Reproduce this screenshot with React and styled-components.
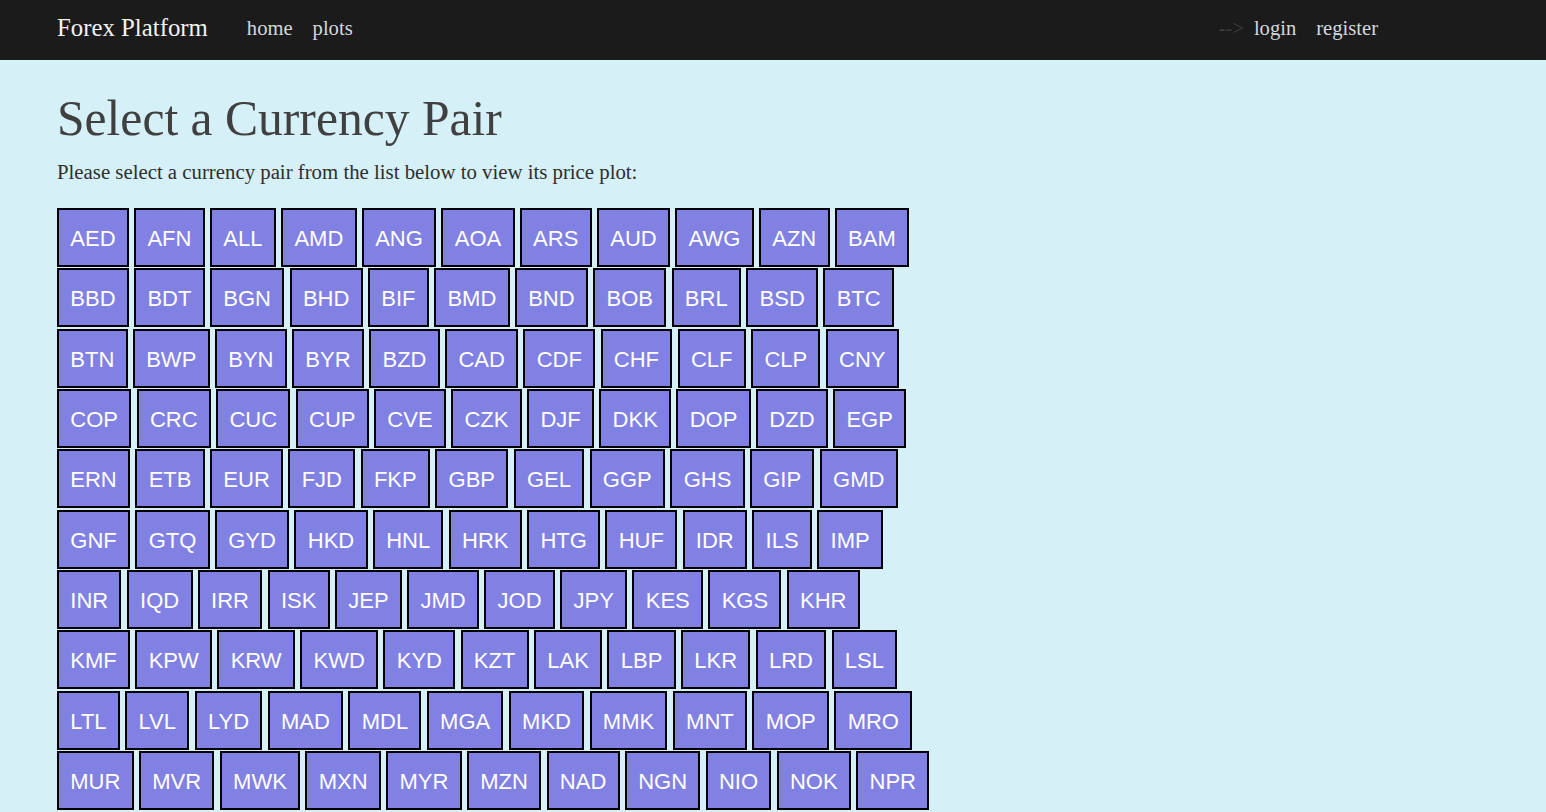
import React from "react";
import styled, { createGlobalStyle } from "styled-components";

const GlobalStyle = createGlobalStyle`
  html, body { margin: 0; padding: 0; }
  body {
    background: #d6f0f7;
    font-family: "Liberation Serif", "Times New Roman", serif;
  }
`;

const NavBar = styled.nav`
  height: 60px;
  background: #1b1b1b;
  display: flex;
  align-items: center;
  padding: 0 168px 0 57px;
  box-sizing: border-box;
`;

const Brand = styled.a`
  font-size: 24.8px;
  color: #f2f2f2;
  text-decoration: none;
  margin-right: 39px;
  margin-top: -4px;
`;

const NavGroup = styled.div`
  display: flex;
  align-items: baseline;
  gap: ${(p) => p.$gap || 20}px;
  margin-left: ${(p) => (p.$right ? "auto" : "0")};
  margin-top: -4px;
`;

const NavLink = styled.a`
  font-size: 20.6px;
  color: ${(p) => (p.$muted ? "#3e3e3e" : "#d4d8dc")};
  text-decoration: none;
  margin-right: ${(p) => p.$mr || 0}px;
`;

const Main = styled.main`
  padding: 30px 0 0 57px;
`;

const Title = styled.h1`
  margin: 0;
  font-weight: normal;
  font-size: 49.6px;
  line-height: 58px;
  color: #404040;
`;

const Lead = styled.p`
  margin: 12px 0 0;
  font-size: 20.8px;
  line-height: 24px;
  color: #2e2e2e;
`;

const Grid = styled.div`
  margin-top: 24px;
  display: flex;
  flex-direction: column;
  gap: 1.33px;
`;

const Row = styled.div`
  display: flex;
  gap: 5.3px;
`;

const PairButton = styled.a`
  box-sizing: border-box;
  height: 59px;
  display: flex;
  align-items: center;
  padding: 3px 11.3px 0;
  border: 2px solid #000;
  background: #8181e4;
  color: #ffffff;
  font-family: "Liberation Sans", Arial, sans-serif;
  font-size: 22px;
  text-decoration: none;
  white-space: nowrap;
`;

const CODES = `AED AFN ALL AMD ANG AOA ARS AUD AWG AZN BAM
BBD BDT BGN BHD BIF BMD BND BOB BRL BSD BTC
BTN BWP BYN BYR BZD CAD CDF CHF CLF CLP CNY
COP CRC CUC CUP CVE CZK DJF DKK DOP DZD EGP
ERN ETB EUR FJD FKP GBP GEL GGP GHS GIP GMD
GNF GTQ GYD HKD HNL HRK HTG HUF IDR ILS IMP
INR IQD IRR ISK JEP JMD JOD JPY KES KGS KHR
KMF KPW KRW KWD KYD KZT LAK LBP LKR LRD LSL
LTL LVL LYD MAD MDL MGA MKD MMK MNT MOP MRO
MUR MVR MWK MXN MYR MZN NAD NGN NIO NOK NPR`
  .split(/\s+/)
  .filter(Boolean);

const rows = [];
for (let i = 0; i < CODES.length; i += 11) rows.push(CODES.slice(i, i + 11));

export default function App() {
  return (
    <>
      <GlobalStyle />
      <NavBar>
        <Brand href="#">Forex Platform</Brand>
        <NavGroup>
          <NavLink href="#">home</NavLink>
          <NavLink href="#">plots</NavLink>
        </NavGroup>
        <NavGroup $right>
          <NavLink $muted $mr={-10}>--&gt;</NavLink>
          <NavLink href="#">login</NavLink>
          <NavLink href="#">register</NavLink>
        </NavGroup>
      </NavBar>
      <Main>
        <Title>Select a Currency Pair</Title>
        <Lead>Please select a currency pair from the list below to view its price plot:</Lead>
        <Grid>
          {rows.map((r, i) => (
            <Row key={i}>
              {r.map((c) => (
                <PairButton key={c} href="#">
                  {c}
                </PairButton>
              ))}
            </Row>
          ))}
        </Grid>
      </Main>
    </>
  );
}
